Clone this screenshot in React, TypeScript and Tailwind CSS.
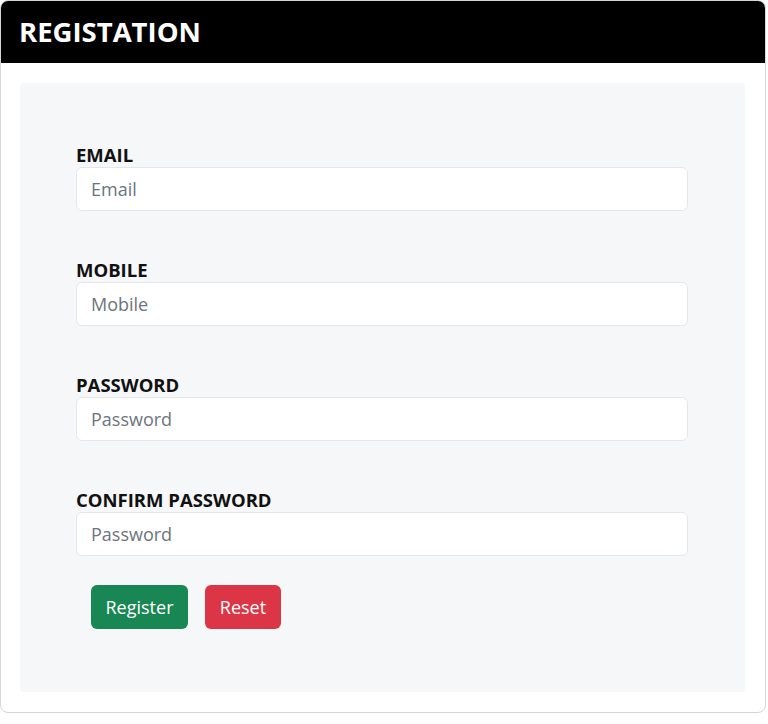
import { useState } from 'react'

const fields = [
  { label: 'EMAIL', placeholder: 'Email', type: 'email' },
  { label: 'MOBILE', placeholder: 'Mobile', type: 'tel' },
  { label: 'PASSWORD', placeholder: 'Password', type: 'password' },
  { label: 'CONFIRM PASSWORD', placeholder: 'Password', type: 'password' },
]

export default function App() {
  const [values, setValues] = useState<string[]>(fields.map(() => ''))

  return (
    <div className="bg-white font-['Open_Sans','Noto_Sans',sans-serif]">
      <div className="w-[766px] h-[713px] border border-[#d4d6d9] rounded-lg overflow-hidden flex flex-col">
        <div className="h-[62px] bg-black flex items-center pl-[18px] shrink-0">
          <h1 className="text-white text-[27.5px] font-bold">REGISTATION</h1>
        </div>
        <div className="flex-1 pt-5 pb-5 pr-5 pl-[19px]">
          <form
            className="h-full bg-[#f6f7f9] rounded pt-[60px] pl-14 pr-[57px]"
            onSubmit={(e) => e.preventDefault()}
            onReset={() => setValues(fields.map(() => ''))}
          >
            <div className="flex flex-col gap-[47px]">
              {fields.map((f, i) => (
                <div key={f.label} className="flex flex-col">
                  <label className="text-[18.5px] leading-6 font-bold text-[#111]">{f.label}</label>
                  <input
                    type={f.type}
                    placeholder={f.placeholder}
                    value={values[i]}
                    onChange={(e) => setValues(values.map((v, j) => (j === i ? e.target.value : v)))}
                    className="h-[44px] bg-white border border-[#e3e6ea] rounded-md px-[14px] text-[18px] text-[#212529] placeholder:text-[#6c757d] outline-none"
                  />
                </div>
              ))}
            </div>
            <div className="flex gap-[17px] mt-[29px] pl-[15px]">
              <button type="submit" className="h-[44px] w-[97px] bg-[#198754] text-white text-[18px] rounded-md">
                Register
              </button>
              <button type="reset" className="h-[44px] w-[76px] bg-[#dc3545] text-white text-[18px] rounded-md">
                Reset
              </button>
            </div>
          </form>
        </div>
      </div>
    </div>
  )
}
